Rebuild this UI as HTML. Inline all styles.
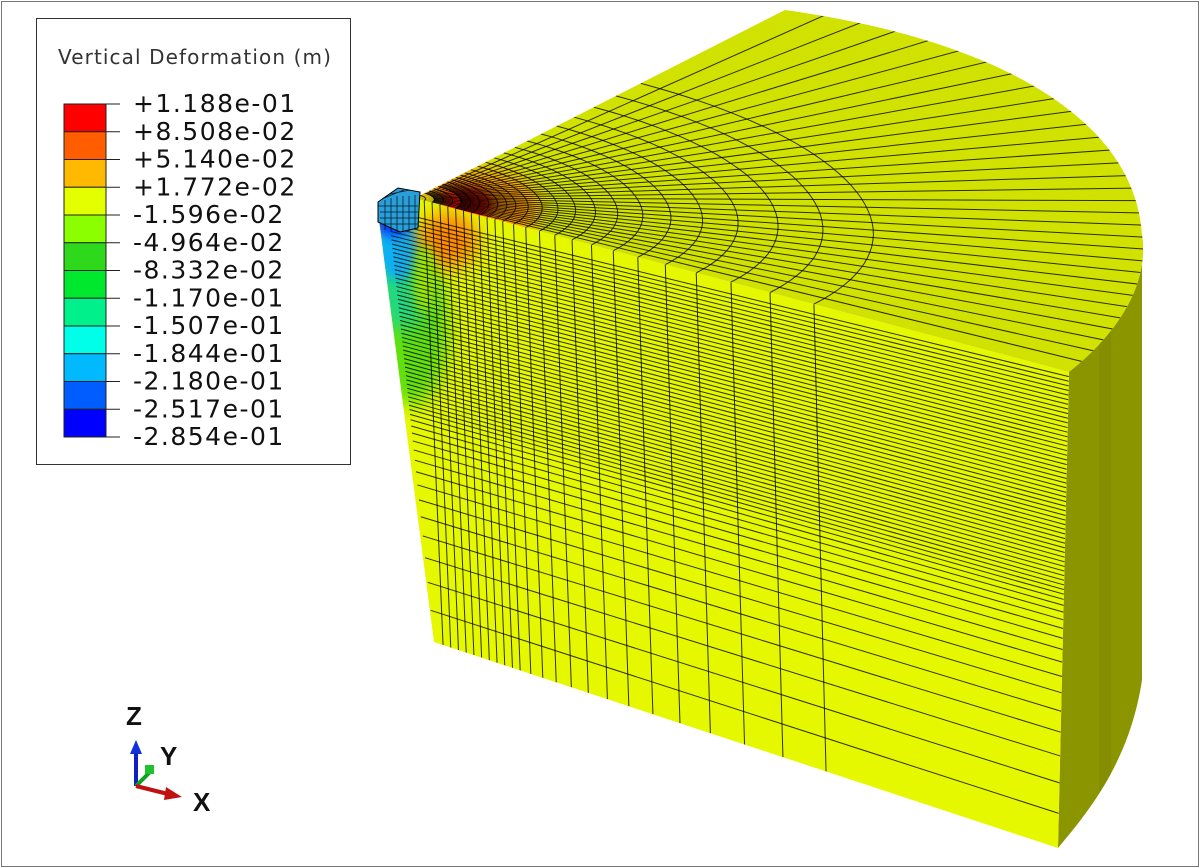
<!DOCTYPE html>
<html><head><meta charset="utf-8"><style>
html,body{margin:0;padding:0;background:#fff;}
#wrap{position:relative;width:1200px;height:868px;overflow:hidden;background:#fff;}
svg{position:absolute;left:0;top:0;}
</style></head><body><div id="wrap">
<svg id="s" width="1200" height="868" viewBox="0 0 1200 868" xmlns="http://www.w3.org/2000/svg">
<defs>
<filter id="bl" x="-50%" y="-50%" width="200%" height="200%"><feGaussianBlur stdDeviation="9"/></filter>
<filter id="bl2" x="-50%" y="-50%" width="200%" height="200%"><feGaussianBlur stdDeviation="5"/></filter>
<clipPath id="ctop"><path d="M415,198 L785,10 C1000,40 1135,120 1142,235 C1150,290 1110,340 1069,372 Z"/></clipPath>
<clipPath id="cfront"><path d="M378,212 L415,198 L1069,372 L1058,848 L434,642 Z"/></clipPath>
<clipPath id="cside"><path d="M1069,372 C1110,340 1150,290 1142,235 L1142,680 C1130,760 1090,810 1058,848 Z"/></clipPath>
</defs>
<rect x="1.5" y="1.5" width="1197" height="865" fill="#fff" stroke="#777" stroke-width="1"/>
<path d="M1069,372 C1110,340 1150,290 1142,235 L1142,680 C1130,760 1090,810 1058,848 Z" fill="#8b9500"/>
<g clip-path="url(#cside)"><path d="M1105,300 L1105,850" stroke="#808a00" stroke-width="12" opacity="0.6"/></g>
<path d="M378,212 L415,198 L1069,372 L1058,848 L434,642 Z" fill="#e6f800"/>
<g clip-path="url(#cfront)">
<ellipse cx="410" cy="330" rx="38" ry="75" fill="#60e010" filter="url(#bl)"/>
<ellipse cx="402" cy="290" rx="28" ry="40" fill="#20d880" filter="url(#bl)"/>
<ellipse cx="398" cy="250" rx="24" ry="30" fill="#10b0f0" filter="url(#bl2)"/>
<ellipse cx="392" cy="226" rx="18" ry="10" fill="#0040ff" filter="url(#bl2)"/>
<ellipse cx="448" cy="240" rx="30" ry="28" fill="#ff8a00" filter="url(#bl)"/>
<ellipse cx="425" cy="280" rx="12" ry="35" fill="#9be800" filter="url(#bl2)"/>
<g id="fl" stroke="#000" stroke-width="1" stroke-opacity="0.8" fill="none"></g>
</g>
<path d="M415,198 L785,10 C1000,40 1135,120 1142,235 C1150,290 1110,340 1069,372 Z" fill="#d2e200"/>
<g clip-path="url(#ctop)">
<ellipse cx="478" cy="208" rx="62" ry="38" fill="#ff9a00" filter="url(#bl)"/>
<ellipse cx="465" cy="205" rx="28" ry="18" fill="#ff1500" filter="url(#bl2)"/>
<ellipse cx="432" cy="212" rx="12" ry="12" fill="#50e020" filter="url(#bl2)"/>
<g id="tl" stroke="#000" stroke-width="1" stroke-opacity="0.8" fill="none"></g>
</g>
<path d="M378,202 L398,188 L420,192 L418,228 L400,232 L378,222 Z" fill="#2a9ed8" stroke="#000" stroke-width="1"/>
<g stroke="#000" stroke-width="0.8" opacity="0.8">
<path d="M384,198 L404,190 M390,194 L410,190 M378,206 L418,206 M380,212 L418,212 M380,218 L418,218 M380,224 L418,224 M385,200 L385,230 M391,198 L391,231 M397,196 L397,232 M403,196 L403,232 M409,196 L409,231 M415,195 L415,229"/>
</g>
<rect x="36.5" y="18.5" width="314" height="446" fill="#fff" stroke="#333" stroke-width="1"/>
<text x="58" y="64" font-family="'DejaVu Sans','Liberation Sans',sans-serif" font-size="20" letter-spacing="1.1" fill="#333">Vertical Deformation (m)</text>
<g stroke="#222" stroke-width="1">
<rect x="64" y="104" width="42" height="27.75" fill="#ff0000"/>
<rect x="64" y="131.75" width="42" height="27.75" fill="#ff5d00"/>
<rect x="64" y="159.5" width="42" height="27.75" fill="#ffb900"/>
<rect x="64" y="187.25" width="42" height="27.75" fill="#e3ff00"/>
<rect x="64" y="215" width="42" height="27.75" fill="#8bff00"/>
<rect x="64" y="242.75" width="42" height="27.75" fill="#2ed81a"/>
<rect x="64" y="270.5" width="42" height="27.75" fill="#00e82e"/>
<rect x="64" y="298.25" width="42" height="27.75" fill="#00f08b"/>
<rect x="64" y="326" width="42" height="27.75" fill="#00ffe8"/>
<rect x="64" y="353.75" width="42" height="27.75" fill="#00b9ff"/>
<rect x="64" y="381.5" width="42" height="27.75" fill="#005dff"/>
<rect x="64" y="409.25" width="42" height="27.75" fill="#0000ff"/>
<path d="M106,104H120M106,131.75H120M106,159.5H120M106,187.25H120M106,215H120M106,242.75H120M106,270.5H120M106,298.25H120M106,326H120M106,353.75H120M106,381.5H120M106,409.25H120M106,437H120"/>
</g>
<g font-family="'DejaVu Sans','Liberation Sans',sans-serif" font-size="25" letter-spacing="1.5" fill="#111">
<text x="133" y="112">+1.188e-01</text>
<text x="133" y="139.75">+8.508e-02</text>
<text x="133" y="167.5">+5.140e-02</text>
<text x="133" y="195.25">+1.772e-02</text>
<text x="133" y="223">-1.596e-02</text>
<text x="133" y="250.75">-4.964e-02</text>
<text x="133" y="278.5">-8.332e-02</text>
<text x="133" y="306.25">-1.170e-01</text>
<text x="133" y="334">-1.507e-01</text>
<text x="133" y="361.75">-1.844e-01</text>
<text x="133" y="389.5">-2.180e-01</text>
<text x="133" y="417.25">-2.517e-01</text>
<text x="133" y="445">-2.854e-01</text>
</g>
<g font-family="'Liberation Sans',sans-serif" font-weight="bold" font-size="26" fill="#111">
<text x="126" y="725">Z</text><text x="160" y="765">Y</text><text x="193" y="811">X</text>
</g>
<path d="M136,786 L136,752" stroke="#1020c0" stroke-width="4"/>
<path d="M130,754 L136,740 L142,754 Z" fill="#1030e0"/>
<path d="M136,786 L150,772" stroke="#10a020" stroke-width="4"/>
<rect x="145" y="765" width="9" height="9" fill="#20c030"/>
<path d="M136,786 L168,794" stroke="#c01010" stroke-width="4"/>
<path d="M166,787 L182,797 L164,800 Z" fill="#c01010"/>
</svg>
<script>
(function(){
var NS="http://www.w3.org/2000/svg";
function P(d,g){var p=document.createElementNS(NS,"path");p.setAttribute("d",d);document.getElementById(g).appendChild(p);}
var O=[415,198],U=[654,174],V=[370,-188];
var rings=[];for(var k=0;k<14;k++){rings.push(0.61*Math.pow(0.89,k));}
var last=rings[rings.length-1];for(var r=last-0.012;r>0.008;r-=0.012){rings.push(r);}
function pt(r,t){return [O[0]+r*(Math.cos(t)*U[0]+Math.sin(t)*V[0]),O[1]+r*(Math.cos(t)*U[1]+Math.sin(t)*V[1])];}
rings.forEach(function(r){var d="";for(var i=0;i<=40;i++){var q=pt(r,i/40*Math.PI/2);d+=(i?"L":"M")+q[0].toFixed(1)+","+q[1].toFixed(1);}P(d,"tl");});
var N=32;for(var j=1;j<N;j++){var t=j/N*Math.PI/2;var a=pt(j%2?0.06:0.025,t),b=pt(1.2,t);P("M"+a[0]+","+a[1]+"L"+b[0]+","+b[1],"tl");}
var B=[1069,372],BL=[434,642],BR=[1058,848];
rings.forEach(function(r){var a=[O[0]+r*(B[0]-O[0]),O[1]+r*(B[1]-O[1])];var b=[BL[0]+r*1.03*(BR[0]-BL[0]),BL[1]+r*1.03*(BR[1]-BL[1])];P("M"+a[0]+","+a[1]+"L"+b[0]+","+b[1],"fl");});
var L=[],s=0;for(var i=0;i<48;i++){s+=0.0104;L.push(s);}var d=0.0104;while(s<0.995){d*=1.134;s+=d;L.push(s);}
var tot=s;
var TLf=[388,206];
L.forEach(function(v){var f=v/tot;if(f>0.995)return;var l=[TLf[0]+f*(BL[0]-TLf[0]),TLf[1]+f*(BL[1]-TLf[1])];var r=[B[0]+f*(BR[0]-B[0]),B[1]+f*(BR[1]-B[1])];P("M"+l[0]+","+l[1]+"L"+r[0]+","+r[1],"fl");});
})();
</script>
</div></body></html>
